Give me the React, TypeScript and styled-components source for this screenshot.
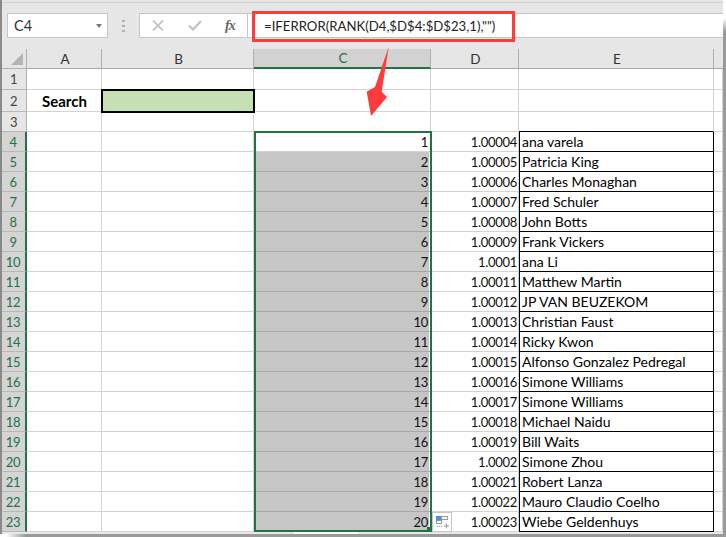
import React from "react";
import styled, { createGlobalStyle } from "styled-components";

const Global = createGlobalStyle`
  html, body { margin: 0; padding: 0; background: #fff; }
  * { box-sizing: border-box; }
`;

const GREEN = "#217346";
const FONT = `Lato, "Open Sans", "Liberation Sans", sans-serif`;
const COLUMNS = "25px 75px 152px 177px 88px 195px 9px";

const Page = styled.div`
  width: 726px;
  height: 537px;
  display: grid;
  grid-template-columns: 723px 3px;
  grid-template-rows: 534px 3px;
  overflow: hidden;
  font-family: ${FONT};
`;
const Frame = styled.div`
  position: relative;
  background: #e6e6e6;
  border-left: 2px solid #8a8a8a;
  display: flex;
  flex-direction: column;
`;
const ShadowRight = styled.div`
  background: linear-gradient(to bottom, #fff 18px, #999 32px);
`;
const ShadowBottom = styled.div`
  background: linear-gradient(to right, #fff 6px, #999 26px);
`;
const ShadowCorner = styled.div`
  background: #999;
`;
const TopStrip = styled.div`
  margin-top: 2px;
  height: 11px;
  border-top: 1px solid #d2d2d2;
`;
const FormulaRow = styled.div`
  height: 25px;
  margin-bottom: 11px;
  padding-left: 5px;
  display: flex;
`;
const NameBox = styled.div`
  width: 101px;
  background: #fff;
  border: 1px solid #c6c6c6;
  display: flex;
  align-items: center;
  justify-content: space-between;
  padding: 0 5px 0 6px;
  font-size: 14.5px;
  color: #333;
`;
const Chevron = styled.span`
  width: 0;
  height: 0;
  border-left: 3.5px solid transparent;
  border-right: 3.5px solid transparent;
  border-top: 4px solid #777;
`;
const Grip = styled.div`
  width: 31px;
  display: flex;
  flex-direction: column;
  align-items: center;
  justify-content: center;
  gap: 3px;
`;
const GripDot = styled.span`
  width: 3px;
  height: 2px;
  background: #b0b0b0;
`;
const FxBox = styled.div`
  width: 109px;
  background: #fff;
  border: 1px solid #c6c6c6;
  display: flex;
  align-items: center;
  padding-left: 12px;
  gap: 24px;
`;
const FxLabel = styled.span`
  font-family: "Liberation Serif", serif;
  font-style: italic;
  font-weight: bold;
  font-size: 14px;
  color: #666;
  margin-left: -1px;
  letter-spacing: -1px;
`;
const FormulaBar = styled.div`
  position: relative;
  flex: 1;
  background: #fff;
  border-top: 1px solid #c6c6c6;
  border-bottom: 1px solid #c6c6c6;
  display: flex;
  align-items: center;
  padding-left: 16px;
  font-size: 13.2px;
  color: #222;
  white-space: nowrap;
`;
const RedBox = styled.div`
  position: absolute;
  left: 4px;
  top: -3px;
  width: 263px;
  height: 31px;
  border: 3px solid #ff3b3b;
`;
const Sheet = styled.div`
  position: relative;
  flex: 1;
  display: flex;
  flex-direction: column;
`;
const HeaderRow = styled.div`
  display: grid;
  grid-template-columns: ${COLUMNS};
  height: 20px;
`;
const Corner = styled.div`
  border-right: 1px solid #b0b0b0;
  border-bottom: 1px solid #b0b0b0;
  display: flex;
  align-items: flex-end;
  justify-content: flex-end;
  padding: 0 3px 3px 0;
`;
const CornerTriangle = styled.span`
  width: 0;
  height: 0;
  border-left: 12px solid transparent;
  border-bottom: 12px solid #b4b4b4;
`;
const ColHead = styled.div<{ $active?: boolean }>`
  display: flex;
  align-items: center;
  justify-content: center;
  padding-left: 2px;
  font-size: 13.5px;
  background: ${(p) => (p.$active ? "#d2d2d2" : "#e6e6e6")};
  color: ${(p) => (p.$active ? GREEN : "#333")};
  border-right: 1px solid #b0b0b0;
  border-bottom: ${(p) => (p.$active ? `2px solid ${GREEN}` : "1px solid #a8a8a8")};
`;
const ColTail = styled.div`
  border-bottom: 1px solid #a8a8a8;
`;
const Row = styled.div<{ $h: number }>`
  display: grid;
  grid-template-columns: ${COLUMNS};
  height: ${(p) => p.$h}px;
`;
const RowHead = styled.div<{ $active?: boolean }>`
  display: flex;
  align-items: center;
  justify-content: center;
  font-size: 13px;
  letter-spacing: -0.3px;
  background: ${(p) => (p.$active ? "#d4d4d4" : "#e6e6e6")};
  color: ${(p) => (p.$active ? GREEN : "#444")};
  border-bottom: 1px solid #b8b8b8;
  border-right: ${(p) => (p.$active ? `2px solid ${GREEN}` : "1px solid #b0b0b0")};
  padding-right: 1px;
`;
const Cell = styled.div`
  background: #fff;
  border-right: 1px solid #d4d4d4;
  border-bottom: 1px solid #d4d4d4;
  display: flex;
  align-items: center;
  font-size: 14px;
  color: #111;
  white-space: nowrap;
`;
const LabelCell = styled(Cell)`
  justify-content: center;
  font-weight: bold;
  font-size: 15px;
  color: #000;
  padding-left: 1px;
`;
const InputCell = styled(Cell)`
  background: #c6e0b4;
  border: 2px solid #000;
  margin: -1px -1px -1px -1px;
  position: relative;
`;
const NumberCell = styled(Cell)<{ $selected?: boolean }>`
  justify-content: flex-end;
  padding-top: 1px;
  padding-right: ${(p) => (p.$column ? "2px" : "1px")};
  font-size: 13px;
  letter-spacing: -0.3px;
  background: ${(p) => (p.$selected ? "#c6c6c6" : "#fff")};
  border-bottom-color: ${(p) => (p.$selected ? "#a8a8a8" : "#d4d4d4")};
  box-shadow: ${(p) => (p.$selected ? "inset -1px 0 0 #fff" : "none")};
` as any;
const NameCell = styled(Cell)`
  border-left: 1px solid #000;
  border-right: 1px solid #000;
  border-bottom: 1px solid #000;
  padding-left: 2px;
  color: #000;
`;
const TopRuleCell = styled(Cell)`
  border-bottom-color: #000;
`;
const Selection = styled.div`
  position: absolute;
  left: 252px;
  top: 82px;
  width: 178px;
  height: 401px;
  border: 2px solid ${GREEN};
  pointer-events: none;
`;
const FillHandle = styled.span`
  position: absolute;
  right: -2px;
  bottom: -1px;
  width: 5px;
  height: 4px;
  background: ${GREEN};
`;
const PasteButton = styled.div`
  position: absolute;
  left: 430px;
  top: 463px;
  width: 20px;
  height: 20px;
  background: #fff;
  border: 1px solid #c6c6c6;
  display: flex;
  align-items: center;
  justify-content: center;
`;
const Arrow = styled.svg`
  position: absolute;
  left: 358px;
  top: -9px;
  width: 35px;
  height: 80px;
  overflow: visible;
`;
const BottomBar = styled.div`
  height: 2px;
  background: #e8e8e8;
  display: flex;
  padding-left: 292px;
`;
const ScrollThumb = styled.div`
  width: 64px;
  background: #fff;
`;

const names = [
  "ana varela", "Patricia King", "Charles Monaghan", "Fred Schuler", "John Botts",
  "Frank Vickers", "ana Li", "Matthew Martin", "JP VAN BEUZEKOM", "Christian Faust",
  "Ricky Kwon", "Alfonso Gonzalez Pedregal", "Simone Williams", "Simone Williams",
  "Michael Naidu", "Bill Waits", "Simone Zhou", "Robert Lanza", "Mauro Claudio Coelho",
  "Wiebe Geldenhuys",
];
const values = [
  "1.00004", "1.00005", "1.00006", "1.00007", "1.00008", "1.00009", "1.0001", "1.00011",
  "1.00012", "1.00013", "1.00014", "1.00015", "1.00016", "1.00017", "1.00018", "1.00019",
  "1.0002", "1.00021", "1.00022", "1.00023",
];

export default function App() {
  return (
    <Page>
      <Global />
      <Frame>
        <TopStrip />
        <FormulaRow>
          <NameBox>
            C4
            <Chevron />
          </NameBox>
          <Grip>
            <GripDot />
            <GripDot />
            <GripDot />
          </Grip>
          <FxBox>
            <svg width="12" height="11" viewBox="0 0 12 11">
              <path d="M1 0.5 L11 10.5 M11 0.5 L1 10.5" stroke="#c4c4c4" strokeWidth="1.8" fill="none" />
            </svg>
            <svg width="14" height="11" viewBox="0 0 14 11">
              <path d="M1 5.5 L5 9.5 L13 1" stroke="#c4c4c4" strokeWidth="2.4" fill="none" />
            </svg>
            <FxLabel>fx</FxLabel>
          </FxBox>
          <FormulaBar>
            =IFERROR(RANK(D4,$D$4:$D$23,1),"")
            <RedBox />
          </FormulaBar>
        </FormulaRow>
        <Sheet>
          <HeaderRow>
            <Corner>
              <CornerTriangle />
            </Corner>
            <ColHead>A</ColHead>
            <ColHead>B</ColHead>
            <ColHead $active>C</ColHead>
            <ColHead>D</ColHead>
            <ColHead>E</ColHead>
            <ColTail />
          </HeaderRow>
          <Row $h={21}>
            <RowHead>1</RowHead>
            <Cell />
            <Cell />
            <Cell />
            <Cell />
            <Cell />
            <Cell />
          </Row>
          <Row $h={22}>
            <RowHead>2</RowHead>
            <LabelCell>Search</LabelCell>
            <InputCell />
            <Cell />
            <Cell />
            <Cell />
            <Cell />
          </Row>
          <Row $h={20}>
            <RowHead>3</RowHead>
            <Cell />
            <Cell />
            <Cell />
            <Cell />
            <TopRuleCell />
            <Cell />
          </Row>
          {names.map((name, i) => (
            <Row $h={20} key={name + i}>
              <RowHead $active>{i + 4}</RowHead>
              <Cell />
              <Cell />
              <NumberCell $column $selected={i > 0}>{i + 1}</NumberCell>
              <NumberCell>{values[i]}</NumberCell>
              <NameCell>{name}</NameCell>
              <Cell />
            </Row>
          ))}
          <Selection>
            <FillHandle />
          </Selection>
          <PasteButton>
            <svg width="13" height="13" viewBox="0 0 13 13">
              <rect x="0.5" y="0.5" width="5" height="3" fill="#4a8cf0" stroke="#4a8cf0" />
              <rect x="5.5" y="0.5" width="6" height="3" fill="#fff" stroke="#999" />
              <rect x="0.5" y="4.5" width="5" height="3" fill="#fff" stroke="#999" />
              <path d="M1 10.5 H7" stroke="#999" strokeDasharray="1 1" />
              <path d="M10.5 7.5 V12.5 M8 10 H13" stroke="#999" />
            </svg>
          </PasteButton>
          <Arrow viewBox="0 0 35 80">
            <path d="M28.7 6.7 L21.7 51.7 L27 57 L11 76 L6.7 51.7 L15 47 Z" fill="#ff3b3b" />
          </Arrow>
        </Sheet>
        <BottomBar>
          <ScrollThumb />
        </BottomBar>
      </Frame>
      <ShadowRight />
      <ShadowBottom />
      <ShadowCorner />
    </Page>
  );
}
